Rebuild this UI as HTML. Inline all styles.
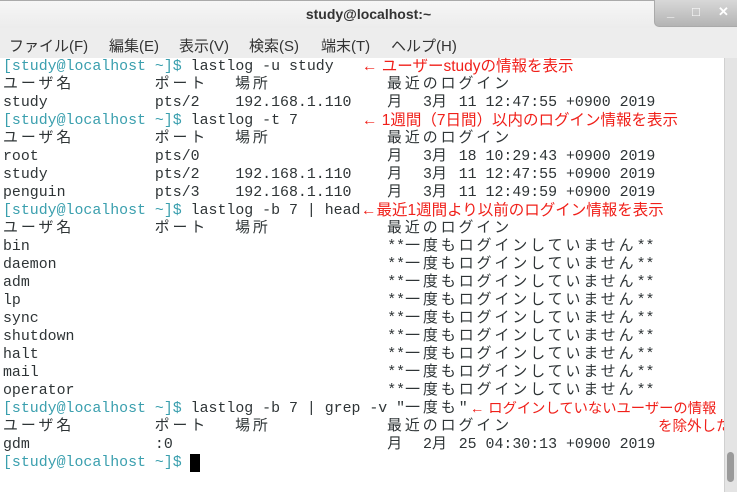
<!DOCTYPE html>
<html><head><meta charset="utf-8"><style>
body{margin:0;width:737px;height:492px;overflow:hidden;background:#fff;position:relative;font-family:"Liberation Sans","Noto Sans CJK JP",sans-serif}
#title{position:absolute;left:0;top:0;width:737px;height:28px;background:linear-gradient(#f6f6f6,#ececec);border-top:1px solid #aaa;box-sizing:border-box;}
#title .t{position:absolute;left:0;width:737px;top:5px;text-align:center;font-size:14px;font-weight:bold;color:#333}
#btns{position:absolute;left:654px;top:0;width:83px;height:26px;background:linear-gradient(#d8d8d8,#b4b4b4);border-radius:0 0 0 5px;border-left:1px solid #aaa;border-bottom:1px solid #aaa}
#btns span{position:absolute;top:4px;color:#fff;font-size:13px;font-weight:bold}
#menu{position:absolute;left:0;top:28px;width:737px;height:30px;background:#ededed;font-size:15px;color:#333}
#menu span{position:absolute;top:7px}
#term{position:absolute;left:3px;top:58px;margin:0;font-family:"Liberation Mono","Noto Sans CJK JP",monospace;font-size:14.9px;line-height:18px;color:#2e3436;white-space:pre}
i{font-style:normal;letter-spacing:2.98px}
.p{color:#3a9fae}
.r{position:absolute;color:#f0201a;font-size:15.5px;white-space:nowrap;line-height:18px}
#sb{position:absolute;left:724px;top:58px;width:13px;height:434px;background:#e4e4e4;border-left:1px solid #d0d0d0}
#thumb{position:absolute;left:727px;top:452px;width:7px;height:30px;background:#9a9a9a;border-radius:4px}
#cur{position:absolute;left:190px;top:454px;width:10px;height:18px;background:#000}
</style></head><body>
<div id="title"><div class="t">study@localhost:~</div></div>
<div id="btns"><span style="left:12px">_</span><span style="left:37px">□</span><span style="left:63px">✕</span></div>
<div id="menu"><span style="left:9px">ファイル(F)</span><span style="left:109px">編集(E)</span><span style="left:179px">表示(V)</span><span style="left:249px">検索(S)</span><span style="left:321px">端末(T)</span><span style="left:391px">ヘルプ(H)</span></div>
<pre id="term"><span class="p">[study@localhost ~]$</span> lastlog -u study
<i>ユーザ名</i>         <i>ポート</i>   <i>場所</i>             <i>最近のログイン</i>
study            pts/2    192.168.1.110    <i>月</i>  3<i>月</i> 11 12:47:55 +0900 2019
<span class="p">[study@localhost ~]$</span> lastlog -t 7
<i>ユーザ名</i>         <i>ポート</i>   <i>場所</i>             <i>最近のログイン</i>
root             pts/0                     <i>月</i>  3<i>月</i> 18 10:29:43 +0900 2019
study            pts/2    192.168.1.110    <i>月</i>  3<i>月</i> 11 12:47:55 +0900 2019
penguin          pts/3    192.168.1.110    <i>月</i>  3<i>月</i> 11 12:49:59 +0900 2019
<span class="p">[study@localhost ~]$</span> lastlog -b 7 | head
<i>ユーザ名</i>         <i>ポート</i>   <i>場所</i>             <i>最近のログイン</i>
bin                                        **<i>一度もログインしていません</i>**
daemon                                     **<i>一度もログインしていません</i>**
adm                                        **<i>一度もログインしていません</i>**
lp                                         **<i>一度もログインしていません</i>**
sync                                       **<i>一度もログインしていません</i>**
shutdown                                   **<i>一度もログインしていません</i>**
halt                                       **<i>一度もログインしていません</i>**
mail                                       **<i>一度もログインしていません</i>**
operator                                   **<i>一度もログインしていません</i>**
<span class="p">[study@localhost ~]$</span> lastlog -b 7 | grep -v "<i>一度も</i>"
<i>ユーザ名</i>         <i>ポート</i>   <i>場所</i>             <i>最近のログイン</i>
gdm              :0                        <i>月</i>  2<i>月</i> 25 04:30:13 +0900 2019
<span class="p">[study@localhost ~]$</span> </pre>
<div id="cur"></div>
<div class="r" style="left:362px;top:58px">← ユーザーstudyの情報を表示</div>
<div class="r" style="left:362px;top:112px">← 1週間（7日間）以内のログイン情報を表示</div>
<div class="r" style="left:361px;top:202px">←最近1週間より以前のログイン情報を表示</div>
<div class="r" style="left:470px;top:400px;font-size:14.3px">← ログインしていないユーザーの情報</div>
<div class="r" style="left:658px;top:418px;font-size:14.5px">を除外した</div>
<div id="sb"></div><div id="thumb"></div>
</body></html>
